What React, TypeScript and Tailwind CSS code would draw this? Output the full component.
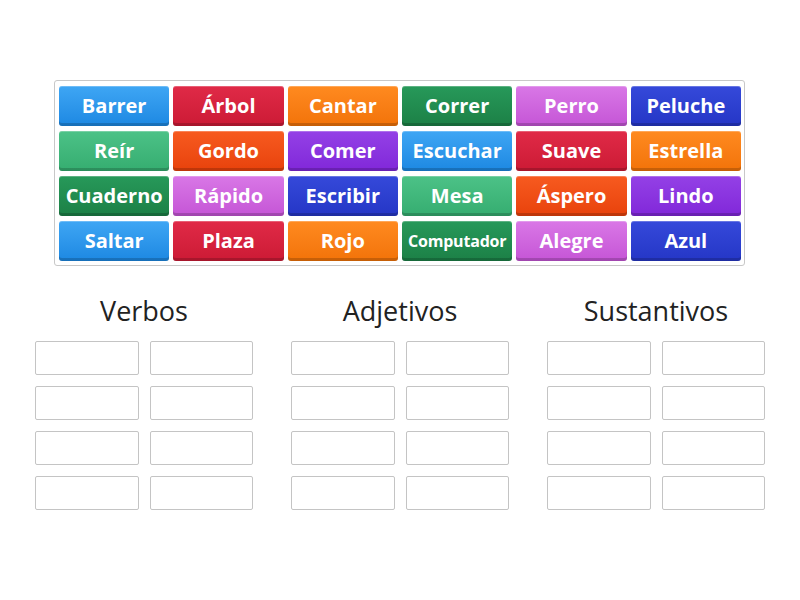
import React from "react";

type Tone =
  | "blue"
  | "red"
  | "orange"
  | "green"
  | "orchid"
  | "indigo"
  | "mint"
  | "flame"
  | "purple";

const TONE_CLASS: Record<Tone, string> = {
  blue: "bg-gradient-to-b from-[#3ea6f4] to-[#1c88e2]",
  red: "bg-gradient-to-b from-[#e02a47] to-[#cc1a35]",
  orange: "bg-gradient-to-b from-[#ff8a1f] to-[#f27308]",
  green: "bg-gradient-to-b from-[#27995a] to-[#1c8046]",
  orchid: "bg-gradient-to-b from-[#d977e6] to-[#c555d6]",
  indigo: "bg-gradient-to-b from-[#3549da] to-[#2536c6]",
  mint: "bg-gradient-to-b from-[#4cc287] to-[#35ad70]",
  flame: "bg-gradient-to-b from-[#f75a1f] to-[#e8420b]",
  purple: "bg-gradient-to-b from-[#9440e6] to-[#8127d9]",
};

const TILES: { label: string; tone: Tone; small?: boolean }[] = [
  { label: "Barrer", tone: "blue" },
  { label: "Árbol", tone: "red" },
  { label: "Cantar", tone: "orange" },
  { label: "Correr", tone: "green" },
  { label: "Perro", tone: "orchid" },
  { label: "Peluche", tone: "indigo" },
  { label: "Reír", tone: "mint" },
  { label: "Gordo", tone: "flame" },
  { label: "Comer", tone: "purple" },
  { label: "Escuchar", tone: "blue" },
  { label: "Suave", tone: "red" },
  { label: "Estrella", tone: "orange" },
  { label: "Cuaderno", tone: "green" },
  { label: "Rápido", tone: "orchid" },
  { label: "Escribir", tone: "indigo" },
  { label: "Mesa", tone: "mint" },
  { label: "Áspero", tone: "flame" },
  { label: "Lindo", tone: "purple" },
  { label: "Saltar", tone: "blue" },
  { label: "Plaza", tone: "red" },
  { label: "Rojo", tone: "orange" },
  { label: "Computador", tone: "green", small: true },
  { label: "Alegre", tone: "orchid" },
  { label: "Azul", tone: "indigo" },
];

const GROUPS = ["Verbos", "Adjetivos", "Sustantivos"];

function Tile({ label, tone, small }: { label: string; tone: Tone; small?: boolean }) {
  return (
    <div
      className={`h-[40px] rounded-[3px] flex items-center justify-center text-white font-bold shadow-[inset_0_-3px_0_rgba(0,0,0,0.18),inset_0_1px_0_rgba(255,255,255,0.25)] ${TONE_CLASS[tone]} ${
        small ? "text-[16px] tracking-[-0.2px]" : "text-[20px]"
      }`}
    >
      <span className="leading-none">{label}</span>
    </div>
  );
}

function DropGroup({ title }: { title: string }) {
  return (
    <div className="w-[218px] flex flex-col items-center">
      <h2 className="text-[27px] leading-none text-[#222] h-[40px] pt-[3px]">{title}</h2>
      <div className="grid grid-cols-2 gap-x-[11px] gap-y-[11px] w-full mt-[7px]">
        {Array.from({ length: 8 }).map((_, i) => (
          <div key={i} className="h-[34px] border border-[#c4c4c4] rounded-[2px] bg-white" />
        ))}
      </div>
    </div>
  );
}

export default function App() {
  return (
    <div
      className="w-[800px] h-[600px] bg-white overflow-hidden"
      style={{ fontFamily: '"Open Sans", sans-serif' }}
    >
      <div className="pt-[80px] flex justify-center">
        <div className="w-[691px] ml-[-1px] border border-[#c8c8c8] rounded-[3px] pl-[4px] pr-[3px] pt-[5px] pb-[4px]">
          <div className="grid grid-cols-6 gap-x-[4px] gap-y-[5px]">
            {TILES.map((t) => (
              <Tile key={t.label} {...t} />
            ))}
          </div>
        </div>
      </div>

      <div className="mt-[28px] flex justify-center gap-[38px]">
        {GROUPS.map((g) => (
          <DropGroup key={g} title={g} />
        ))}
      </div>
    </div>
  );
}
